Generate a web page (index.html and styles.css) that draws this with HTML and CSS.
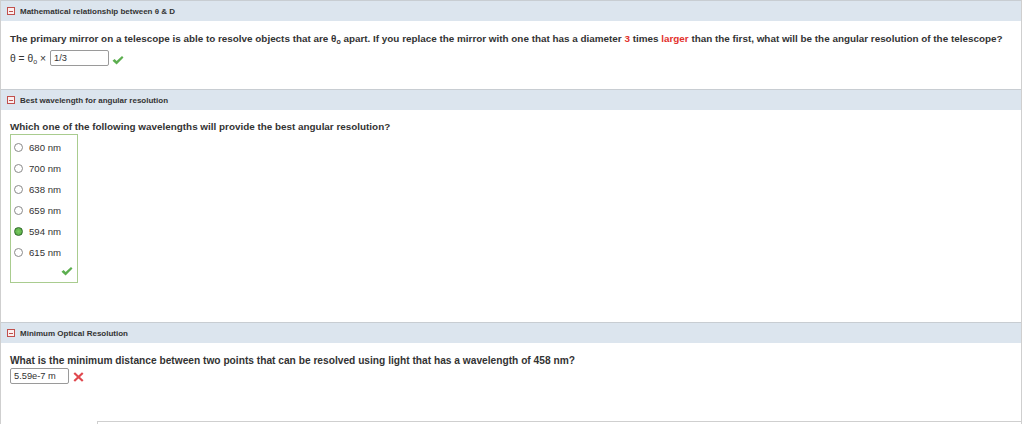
FILE: index.html
```html
<!DOCTYPE html>
<html lang="en">
<head>
    <meta charset="UTF-8">
    <title>Angular Resolution</title>
    <link rel="stylesheet" href="styles.css">
</head>
<body>
    <div class="page">
        <div class="section">
            <div class="section-head"><span class="toggle"></span>Mathematical relationship between &theta; &amp; D</div>
            <div class="section-body first">
                <p class="question">The primary mirror on a telescope is able to resolve objects that are &theta;<sub>o</sub> apart. If you replace the mirror with one that has a diameter <span class="hl">3</span> times <span class="hl">larger</span> than the first, what will be the angular resolution of the telescope?</p>
                <div class="answer">
                    <span class="formula">&theta; = &theta;<sub>o</sub> &times;</span>
                    <input type="text" value="1/3">
                    <svg class="check" viewBox="0 0 12 9" width="12" height="9"><path d="M0.5 4.8 L2.6 3 L4.6 5 L10 0 L11.5 1.6 L4.6 8.5 Z" fill="#5cae4f"/></svg>
                </div>
            </div>
        </div>

        <div class="section">
            <div class="section-head"><span class="toggle"></span>Best wavelength for angular resolution</div>
            <div class="section-body second">
                <p class="question">Which one of the following wavelengths will provide the best angular resolution?</p>
                <div class="choices">
                    <label class="choice"><span class="radio"></span>680 nm</label>
                    <label class="choice"><span class="radio"></span>700 nm</label>
                    <label class="choice"><span class="radio"></span>638 nm</label>
                    <label class="choice"><span class="radio"></span>659 nm</label>
                    <label class="choice"><span class="radio on"></span>594 nm</label>
                    <label class="choice"><span class="radio"></span>615 nm</label>
                    <div class="choice-mark">
                        <svg class="check" viewBox="0 0 12 9" width="12" height="9"><path d="M0.5 4.8 L2.6 3 L4.6 5 L10 0 L11.5 1.6 L4.6 8.5 Z" fill="#5cae4f"/></svg>
                    </div>
                </div>
            </div>
        </div>

        <div class="section">
            <div class="section-head"><span class="toggle"></span>Minimum Optical Resolution</div>
            <div class="section-body third">
                <p class="question wide">What is the minimum distance between two points that can be resolved using light that has a wavelength of 458 nm?</p>
                <div class="answer">
                    <input type="text" value="5.59e-7 m">
                    <svg class="cross" viewBox="0 0 11 10" width="11" height="10"><path d="M0.5 1.8 L2 0.3 L5.5 3.6 L9 0.3 L10.5 1.8 L7 5 L10.5 8.2 L9 9.7 L5.5 6.4 L2 9.7 L0.5 8.2 L4 5 Z" fill="#e0484e"/></svg>
                </div>
            </div>
            <div class="footer-box"></div>
        </div>
    </div>
</body>
</html>
```

FILE: styles.css
```css
body { margin: 0; font-family: "Liberation Sans", Arial, sans-serif; color: #333; background: #fff; }
.page { width: 1022px; height: 424px; border-left: 1px solid #cfcfcf; border-right: 1px solid #cfcfcf; box-sizing: border-box; overflow: hidden; }
.section-head { height: 20px; border-top: 1px solid #c8cdd2; background: #dce5ee; display: flex; align-items: center; gap: 5px; padding-left: 6px; font-size: 8px; font-weight: bold; color: #333; }
.toggle { width: 6px; height: 6px; border: 1px solid #c0504d; background: #fbeeee; position: relative; }
.toggle::after { content: ""; position: absolute; left: 1px; top: 2.5px; width: 4px; height: 1px; background: #c0504d; }
.section-body { padding: 12px 9px 0; }
.section-body.first { height: 56px; }
.section-body.second { padding-top: 11px; height: 201px; }
.section-body.third { height: 66px; }
.question { margin: 0; font-size: 9.9px; font-weight: bold; line-height: 12px; }
.question.wide { font-size: 10.2px; }
.question sub, .formula sub { font-size: 7px; vertical-align: -2px; line-height: 0; }
.hl { color: #e3312c; }
.answer { display: flex; align-items: center; margin-top: 5px; font-size: 9px; }
.third .answer { margin-top: 1px; }
.formula { margin-right: 4px; font-size: 10.3px; }
input { width: 59px; height: 16px; box-sizing: border-box; border: 1px solid #9a9a9a; border-radius: 2px; padding: 0 3px; font-family: "Liberation Sans", Arial, sans-serif; font-size: 9.3px; color: #333; }
.check { margin-left: 3px; margin-top: 4px; }
.cross { margin-left: 4px; margin-top: 1px; }
.choices { width: 68px; height: 149px; box-sizing: border-box; margin-top: 1px; border: 1px solid #a9cc8f; padding: 2px 3px 0; }
.choice { display: flex; align-items: center; gap: 6px; height: 21px; font-size: 9.6px; }
.radio { width: 9px; height: 9px; box-sizing: border-box; border: 1px solid #8a8a8a; border-radius: 50%; background: #fff; }
.radio.on { border: 1.5px solid #2f6a2a; background: radial-gradient(circle, #7ccc62 0, #4ea23f 100%); }
.choice-mark { display: flex; justify-content: flex-end; padding: 4px 1px 0 0; }
.choice-mark .check { margin: 0; }
.footer-box { margin-left: 96px; height: 10px; border-top: 1px solid #cfcfcf; border-left: 1px solid #cfcfcf; }
```
